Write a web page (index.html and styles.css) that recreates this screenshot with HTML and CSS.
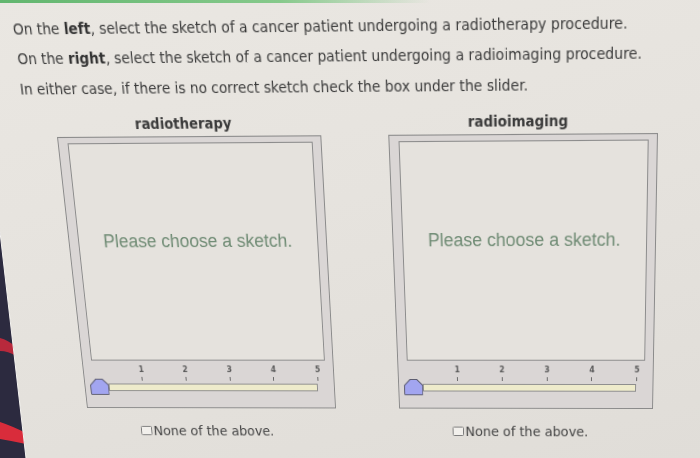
FILE: index.html
```html
<!DOCTYPE html>
<html lang="en">
<head>
<meta charset="utf-8">
<title>Sketch selection</title>
<link rel="stylesheet" href="styles.css">
</head>
<body>
<div class="screen">
  <div class="topbar"></div>
  <div class="sheet">
    <div class="intro">
      <p class="line">On the <b>left</b>, select the sketch of a cancer patient undergoing a radiotherapy procedure.</p>
      <p class="line l2">On the <b>right</b>, select the sketch of a cancer patient undergoing a radioimaging procedure.</p>
      <p class="line">In either case, if there is no correct sketch check the box under the slider.</p>
    </div>
    <div class="panels">
      <section class="panel">
        <h2 class="title">radiotherapy</h2>
        <div class="frame">
          <div class="canvas"><span class="prompt">Please choose a sketch.</span></div>
          <div class="slider">
            <div class="ticks">
              <div class="tick"><span class="num">1</span><span class="mark"></span></div>
              <div class="tick"><span class="num">2</span><span class="mark"></span></div>
              <div class="tick"><span class="num">3</span><span class="mark"></span></div>
              <div class="tick"><span class="num">4</span><span class="mark"></span></div>
              <div class="tick"><span class="num">5</span><span class="mark"></span></div>
            </div>
            <div class="rail">
              <svg class="thumb" viewBox="0 0 20.4 17"><path d="M0.6 15.4V6.6L6.6 0.6H13.8L19.8 6.6V15.4Q19.8 16.4 18.8 16.4H1.6Q0.6 16.4 0.6 15.4Z" fill="#a2a5f0" stroke="#5b5b6e" stroke-width="1"/></svg>
              <div class="track"></div>
            </div>
          </div>
        </div>
        <label class="none"><span class="box"></span>None of the above.</label>
      </section>
      <section class="panel">
        <h2 class="title">radioimaging</h2>
        <div class="frame">
          <div class="canvas"><span class="prompt">Please choose a sketch.</span></div>
          <div class="slider">
            <div class="ticks">
              <div class="tick"><span class="num">1</span><span class="mark"></span></div>
              <div class="tick"><span class="num">2</span><span class="mark"></span></div>
              <div class="tick"><span class="num">3</span><span class="mark"></span></div>
              <div class="tick"><span class="num">4</span><span class="mark"></span></div>
              <div class="tick"><span class="num">5</span><span class="mark"></span></div>
            </div>
            <div class="rail">
              <svg class="thumb" viewBox="0 0 20.4 17"><path d="M0.6 15.4V6.6L6.6 0.6H13.8L19.8 6.6V15.4Q19.8 16.4 18.8 16.4H1.6Q0.6 16.4 0.6 15.4Z" fill="#a2a5f0" stroke="#5b5b6e" stroke-width="1"/></svg>
              <div class="track"></div>
            </div>
          </div>
        </div>
        <label class="none"><span class="box"></span>None of the above.</label>
      </section>
    </div>
  </div>
  <svg class="edge" viewBox="0 0 30 458" aria-hidden="true">
    <defs>
      <clipPath id="bezel"><polygon points="0,232 26,458 0,458"/></clipPath>
    </defs>
    <g clip-path="url(#bezel)">
      <rect x="0" y="220" width="30" height="238" fill="#2c2a3f"/>
      <path d="M0 338 Q8 340 16 347 L16 356 Q8 351 0 351 Z" fill="#b8293c"/>
      <path d="M0 422 Q12 426 26 433 L26 444 Q12 441 0 439 Z" fill="#d92c3b"/>
    </g>
    <line x1="0" y1="232" x2="26" y2="458" stroke="#f5f3f0" stroke-width="1"/>
  </svg>
</div>
</body>
</html>
```

FILE: styles.css
```css
html, body {
  margin: 0;
  padding: 0;
}

body {
  width: 700px;
  height: 458px;
  overflow: hidden;
  background: #e4e1dc;
}

.screen {
  position: relative;
  width: 700px;
  height: 458px;
  overflow: hidden;
  background: linear-gradient(165deg, #eae7e2 0%, #e6e3de 45%, #e0ddd8 100%);
}

.topbar {
  height: 3px;
  width: 430px;
  background: linear-gradient(to right, #62b66f, #86c98b 65%, rgba(170, 215, 170, 0));
}

.sheet {
  width: 700px;
  height: 455px;
  transform-origin: 0 -3px;
  transform: matrix3d(1.00929, -0.011035, 0, -0.000031431,
                      0.133919, 1.121472, 0, 0.000233546,
                      0, 0, 1, 0,
                      -17.034, -10.785, 0, 1);
}

.intro {
  padding-top: 20px;
}

.line {
  margin: 0;
  padding-left: 25px;
  font: 13.7px/27.3px "DejaVu Sans", Verdana, sans-serif;
  color: #3b3b3b;
  white-space: nowrap;
}

.line b {
  font-weight: 700;
  color: #333;
}

.l2 {
  padding-left: 26px;
}

.panels {
  display: flex;
  gap: 67px;
  padding-left: 57px;
  margin-top: 11px;
}

.panel {
  width: 267px;
  display: flex;
  flex-direction: column;
}

.title {
  margin: 0 0 2px;
  padding-right: 9px;
  text-align: center;
  font: 700 13.3px/18px "DejaVu Sans", Verdana, sans-serif;
  color: #3a3a3a;
}

.frame {
  box-sizing: border-box;
  height: 272px;
  border: 1px solid #8a8a8a;
  background: #dad6d5;
}

.canvas {
  box-sizing: border-box;
  height: 216px;
  margin: 5px 8px 0 8.5px;
  padding-top: 83px;
  border: 1px solid #8c8c8c;
  background: #e5e2dd;
  text-align: center;
  line-height: 22px;
}

.prompt {
  font: 18px/22px "Liberation Sans", Arial, sans-serif;
  color: #6f8b74;
}

.slider {
  height: 49px;
}

.ticks {
  display: flex;
  gap: 26.8px;
  margin-left: 51.6px;
  padding-top: 6.5px;
}

.tick {
  width: 20px;
  display: flex;
  flex-direction: column;
  align-items: center;
}

.num {
  font: 700 8px/8px "DejaVu Sans", sans-serif;
  color: #5a5a5a;
}

.mark {
  width: 1px;
  height: 4px;
  margin-top: 3px;
  background: #666;
}

.rail {
  display: flex;
  align-items: flex-start;
  margin-top: -2px;
  padding-left: 5px;
}

.thumb {
  display: block;
  flex: none;
  width: 20.4px;
  height: 17px;
}

.track {
  box-sizing: border-box;
  width: 223px;
  height: 7.4px;
  margin-top: 4.9px;
  border: 1px solid #8d8d8d;
  background: #eeebcb;
}

.none {
  display: flex;
  align-items: center;
  justify-content: center;
  padding-right: 12px;
  margin-top: 16px;
  font: 13.6px/16px "DejaVu Sans", sans-serif;
  color: #454545;
}

.box {
  box-sizing: border-box;
  width: 12px;
  height: 10px;
  margin-right: 2px;
  border: 1px solid #7a7a7a;
  border-radius: 1.5px;
  background: #f2f0ec;
}

.edge {
  position: absolute;
  left: 0;
  top: 0;
  width: 30px;
  height: 458px;
}
```
